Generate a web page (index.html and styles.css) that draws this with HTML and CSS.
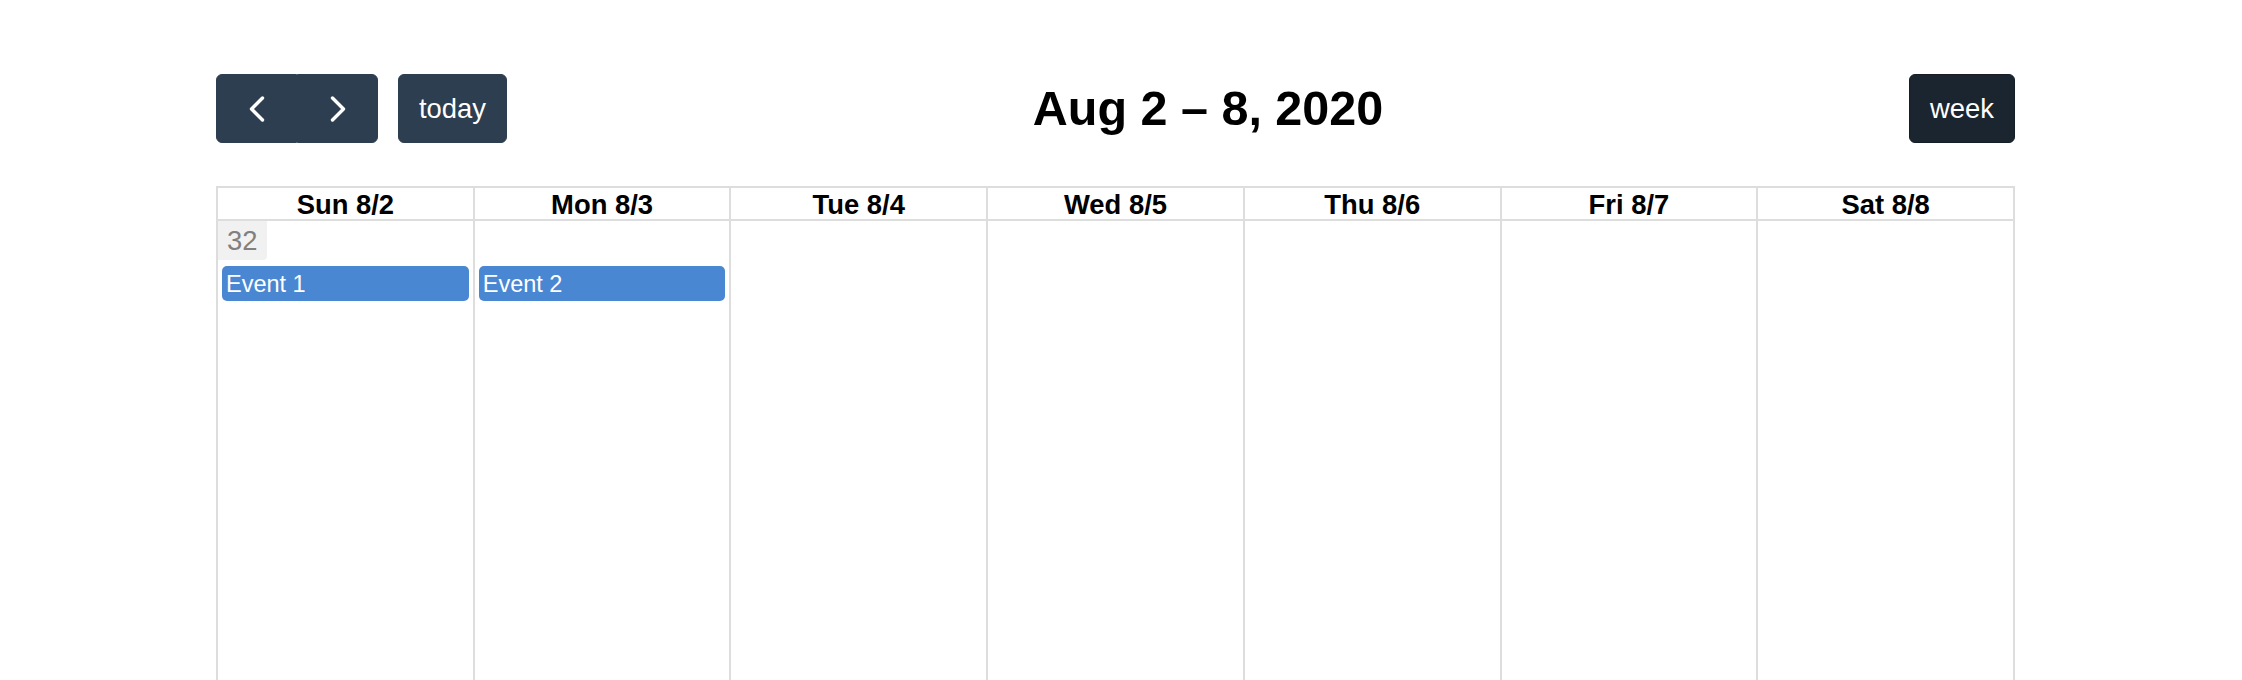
FILE: index.html
```html
<!DOCTYPE html>
<html>
<head>
<meta charset="utf-8">
<link rel="stylesheet" href="styles.css">
</head>
<body>
<div class="calendar">
  <div class="toolbar">
    <div class="chunk">
      <div class="btn-group">
        <button class="btn icon-btn" aria-label="prev">
          <svg width="16" height="26" viewBox="0 0 16 26"><polyline points="13.5,2 2.5,13 13.5,24" fill="none" stroke="#fff" stroke-width="3.4" stroke-linecap="round" stroke-linejoin="round"/></svg>
        </button>
        <button class="btn icon-btn" aria-label="next">
          <svg width="16" height="26" viewBox="0 0 16 26"><polyline points="2.5,2 13.5,13 2.5,24" fill="none" stroke="#fff" stroke-width="3.4" stroke-linecap="round" stroke-linejoin="round"/></svg>
        </button>
      </div>
      <button class="btn text-btn">today</button>
    </div>
    <div class="chunk">
      <h2 class="title">Aug 2 – 8, 2020</h2>
    </div>
    <div class="chunk">
      <button class="btn text-btn active">week</button>
    </div>
  </div>
  <div class="grid">
    <div class="head">Sun 8/2</div>
    <div class="head">Mon 8/3</div>
    <div class="head">Tue 8/4</div>
    <div class="head">Wed 8/5</div>
    <div class="head">Thu 8/6</div>
    <div class="head">Fri 8/7</div>
    <div class="head">Sat 8/8</div>
    <div class="day">
      <div class="weeknum">32</div>
      <div class="event">Event 1</div>
    </div>
    <div class="day">
      <div class="spacer"></div>
      <div class="event">Event 2</div>
    </div>
    <div class="day"></div>
    <div class="day"></div>
    <div class="day"></div>
    <div class="day"></div>
    <div class="day"></div>
  </div>
</div>
</body>
</html>
```

FILE: styles.css
```css
html, body {
  margin: 0;
  padding: 0;
  background: #ffffff;
}

body {
  font-family: "Liberation Sans", Arial, sans-serif;
  font-size: 27.4px;
  color: #000;
}

.calendar {
  width: 1799px;
  margin-left: 216px;
  padding-top: 74px;
}

.toolbar {
  display: flex;
  justify-content: space-between;
  align-items: center;
  margin-bottom: 43px;
}

.chunk {
  display: flex;
  align-items: center;
}

.btn-group {
  display: flex;
  margin-right: 20px;
}

.btn {
  font-family: "Liberation Sans", Arial, sans-serif;
  font-size: 27.4px;
  color: #fff;
  background: #2c3e50;
  border: 1px solid #2c3e50;
  border-radius: 6px;
  height: 69px;
  margin: 0;
  cursor: pointer;
  display: flex;
  align-items: center;
  justify-content: center;
}

.icon-btn {
  width: 81px;
  padding: 0;
}

.btn-group .icon-btn:first-child {
  border-top-right-radius: 0;
  border-bottom-right-radius: 0;
}

.btn-group .icon-btn:last-child {
  border-top-left-radius: 0;
  border-bottom-left-radius: 0;
}

.text-btn {
  padding: 0 20px;
  line-height: 1;
}

.active {
  background: #1a252f;
  border-color: #151e27;
}

.title {
  margin: 0;
  font-size: 48.5px;
  font-weight: bold;
  line-height: 1.15;
}

.grid {
  display: grid;
  grid-template-columns: repeat(7, 1fr);
  border-left: 2px solid #dddddd;
  border-top: 2px solid #dddddd;
}

.head {
  height: 31px;
  line-height: 33px;
  text-align: center;
  font-weight: bold;
  border-right: 2px solid #dddddd;
  border-bottom: 2px solid #dddddd;
}

.day {
  height: 459px;
  border-right: 2px solid #dddddd;
}

.weeknum {
  display: inline-block;
  vertical-align: top;
  padding: 2px 10px 2px 9px;
  line-height: 35px;
  color: #808080;
  background: #f1f1f1;
  border-bottom-right-radius: 4px;
}

.spacer {
  height: 39px;
}

.event {
  margin: 6px 4px 0 4px;
  height: 35px;
  line-height: 36px;
  padding: 0 4px;
  font-size: 23.5px;
  color: #fff;
  background: #4a87d3;
  border-radius: 5px;
  overflow: hidden;
}
```
